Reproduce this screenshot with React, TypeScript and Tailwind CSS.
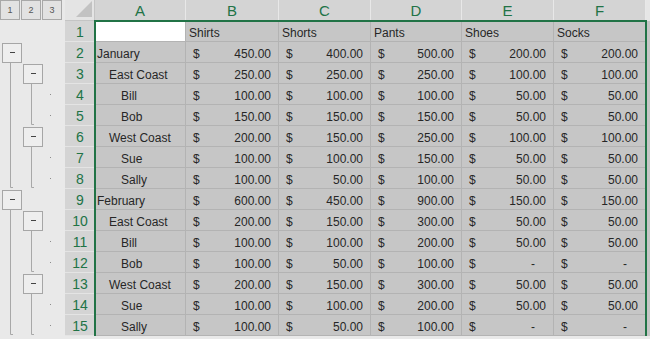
import React from 'react';

type Row = { label: string; level: number; vals: (number | null)[] };

const rows: Row[] = [
  { label: 'January', level: 1, vals: [450, 400, 500, 200, 200] },
  { label: 'East Coast', level: 2, vals: [250, 250, 250, 100, 100] },
  { label: 'Bill', level: 3, vals: [100, 100, 100, 50, 50] },
  { label: 'Bob', level: 3, vals: [150, 150, 150, 50, 50] },
  { label: 'West Coast', level: 2, vals: [200, 150, 250, 100, 100] },
  { label: 'Sue', level: 3, vals: [100, 100, 150, 50, 50] },
  { label: 'Sally', level: 3, vals: [100, 50, 100, 50, 50] },
  { label: 'February', level: 1, vals: [600, 450, 900, 150, 150] },
  { label: 'East Coast', level: 2, vals: [200, 150, 300, 50, 50] },
  { label: 'Bill', level: 3, vals: [100, 100, 200, 50, 50] },
  { label: 'Bob', level: 3, vals: [100, 50, 100, null, null] },
  { label: 'West Coast', level: 2, vals: [200, 150, 300, 50, 50] },
  { label: 'Sue', level: 3, vals: [100, 100, 200, 50, 50] },
  { label: 'Sally', level: 3, vals: [100, 50, 100, null, null] },
];

const headers = ['Shirts', 'Shorts', 'Pants', 'Shoes', 'Socks'];
const letters = ['A', 'B', 'C', 'D', 'E', 'F'];
const widths = ['w-[91px]', 'w-[93px]', 'w-[92px]', 'w-[91px]', 'w-[92px]', 'w-[92px]'];
const indent: Record<number, string> = { 1: 'pl-[2px]', 2: 'pl-[14px]', 3: 'pl-[26px]' };

const cell = 'h-[21px] shrink-0 flex items-end pb-[1px] leading-[14px] border-r border-b border-[#b3b3b3] bg-[#c6c6c6] text-[#262626]';

// outline gutter: buttons, bracket lines and dots
function Outline() {
  const top = (r: number) => (r - 1) * 21;
  const lvl1 = [2, 9];
  const lvl2 = [3, 6, 10, 13];
  const dots = [4, 5, 7, 8, 11, 12, 14, 15];
  const lines1: [number, number][] = [[2, 8], [9, 15]];
  const lines2: [number, number][] = [[3, 5], [6, 8], [10, 12], [13, 15]];
  return (
    <svg width="65" height="315" className="block">
      {lines1.map(([a, b]) => (
        <path key={'a' + a} d={`M10.5 ${top(a) + 20} V${top(b) + 19.5} H13`} stroke="#a8a8a8" fill="none" />
      ))}
      {lines2.map(([a, b]) => (
        <path key={'b' + a} d={`M31.5 ${top(a) + 20} V${top(b) + 19.5} H34`} stroke="#a8a8a8" fill="none" />
      ))}
      {dots.map((r) => (
        <rect key={'d' + r} x="50" y={top(r) + 10} width="1" height="1" fill="#8c8c8c" />
      ))}
      {lvl1.map((r) => (
        <g key={'p' + r}>
          <rect x="2.5" y={top(r) + 1.5} width="19" height="19" fill="#eeeeee" stroke="#a6a6a6" />
          <path d={`M10 ${top(r) + 10.5} H15`} stroke="#444" />
        </g>
      ))}
      {lvl2.map((r) => (
        <g key={'q' + r}>
          <rect x="23.5" y={top(r) + 1.5} width="19" height="19" fill="#eeeeee" stroke="#a6a6a6" />
          <path d={`M31 ${top(r) + 10.5} H36`} stroke="#444" />
        </g>
      ))}
    </svg>
  );
}

function Money({ v }: { v: number | null }) {
  return (
    <div className="flex w-full items-center justify-between px-[7px]">
      <span>$</span>
      {v === null ? <span className="pr-[11px]">-</span> : <span>{v.toFixed(2)}</span>}
    </div>
  );
}

export default function App() {
  return (
    <div className="w-[650px] h-[339px] overflow-hidden bg-[#e9e9e9] text-[12px]" style={{ fontFamily: '"Liberation Sans", Arial, sans-serif' }}>
      {/* header row */}
      <div className="flex h-[21px]">
        <div className="flex w-[65px] shrink-0 gap-px">
          {['1', '2', '3'].map((n) => (
            <div key={n} className="flex h-[20px] w-[20px] items-center justify-center border border-[#a8a8a8] bg-[#e2e2e2] text-[9px] leading-none text-[#555]">
              {n}
            </div>
          ))}
        </div>
        <div className="flex w-[30px] shrink-0 items-end justify-end border-r border-b border-[#c4c4c4] bg-[#e4e4e4] pr-[2px] pb-[3px]">
          <svg width="16" height="16"><path d="M16 0 V16 H0 Z" fill="#c2c2c2" /></svg>
        </div>
        {letters.map((l, i) => (
          <div key={l} className={`${widths[i]} flex shrink-0 items-center justify-center border-r border-b border-[#e8e8e8] bg-[#d4d4d4] pt-[2px] text-[15px] leading-[16px] text-[#217346]`}>
            {l}
          </div>
        ))}
        <div className="flex-1 bg-[#e6e6e6]" />
      </div>

      {/* body */}
      <div className="flex">
        <div className="w-[65px] shrink-0">
          <Outline />
        </div>
        <div className="w-[30px] shrink-0">
          {Array.from({ length: 15 }, (_, i) => (
            <div key={i} className="flex h-[21px] items-center justify-center border-b border-[#e4e4e4] bg-[#d4d4d4] pt-[2px] text-[14px] leading-[16px] text-[#217346]">
              {i + 1}
            </div>
          ))}
        </div>
        <div className="relative w-[551px] shrink-0">
          <div className="flex">
            <div className={`${widths[0]} ${cell} !bg-white`} />
            {headers.map((h, i) => (
              <div key={h} className={`${widths[i + 1]} ${cell} pl-[3px]`}>{h}</div>
            ))}
          </div>
          {rows.map((r, ri) => (
            <div key={ri} className="flex">
              <div className={`${widths[0]} ${cell} ${indent[r.level]}`}>{r.label}</div>
              {r.vals.map((v, i) => (
                <div key={i} className={`${widths[i + 1]} ${cell}`}>
                  <Money v={v} />
                </div>
              ))}
            </div>
          ))}
          <div className="pointer-events-none absolute -top-px -left-px -right-px bottom-0 border-2 border-b-0 border-[#217346]" />
        </div>
        <div className="flex-1 bg-[#c6c6c6]" />
      </div>
    </div>
  );
}
